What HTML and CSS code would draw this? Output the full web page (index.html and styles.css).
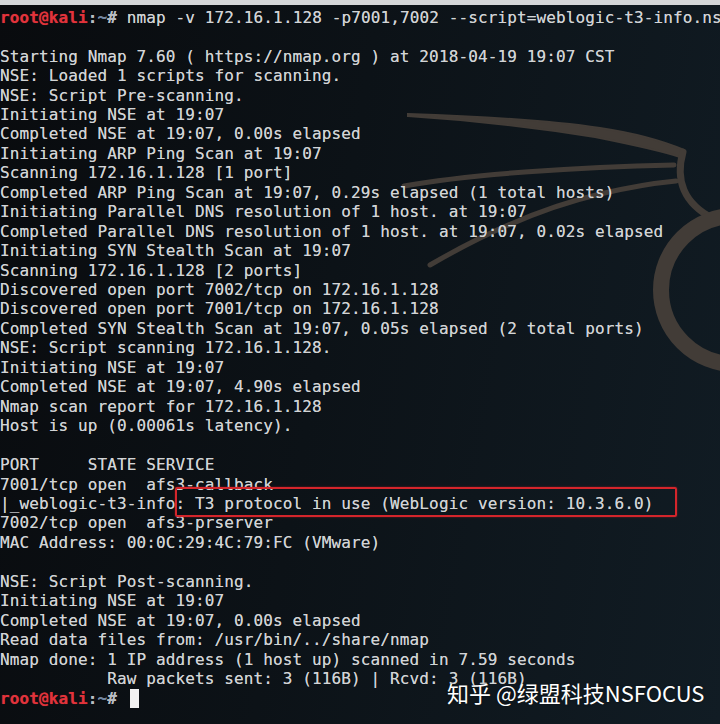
FILE: index.html
```html
<!DOCTYPE html>
<html>
<head>
<meta charset="utf-8">
<link rel="stylesheet" href="styles.css">
</head>
<body>
<div class="screen">
  <div class="topbar"></div>
  <svg class="dragon" width="720" height="724" viewBox="0 0 720 724" aria-hidden="true">
    <path class="wing" d="M408,114 C470,116 540,119 600,128 C640,134 665,142 684,150 L680,157 C660,150 630,144 595,137 C540,128 470,120 408,116 Z" />
    <path class="thin" d="M404,186 C470,174 580,167 674,165" />
    <path class="thin" d="M430,265 C480,236 540,208 600,194 C630,187 655,183 676,181" />
    <path d="M683,152 C679,166 679,178 684,190 C690,204 700,212 714,219" />
    <circle cx="735" cy="290" r="74" />
  </svg>
  <pre class="term"><span class="user">root@kali</span><span class="sep">:</span><span class="path">~</span><span class="sep">#</span> nmap -v 172.16.1.128 -p7001,7002 --script=weblogic-t3-info.nse

Starting Nmap 7.60 ( https://nmap.org ) at 2018-04-19 19:07 CST
NSE: Loaded 1 scripts for scanning.
NSE: Script Pre-scanning.
Initiating NSE at 19:07
Completed NSE at 19:07, 0.00s elapsed
Initiating ARP Ping Scan at 19:07
Scanning 172.16.1.128 [1 port]
Completed ARP Ping Scan at 19:07, 0.29s elapsed (1 total hosts)
Initiating Parallel DNS resolution of 1 host. at 19:07
Completed Parallel DNS resolution of 1 host. at 19:07, 0.02s elapsed
Initiating SYN Stealth Scan at 19:07
Scanning 172.16.1.128 [2 ports]
Discovered open port 7002/tcp on 172.16.1.128
Discovered open port 7001/tcp on 172.16.1.128
Completed SYN Stealth Scan at 19:07, 0.05s elapsed (2 total ports)
NSE: Script scanning 172.16.1.128.
Initiating NSE at 19:07
Completed NSE at 19:07, 4.90s elapsed
Nmap scan report for 172.16.1.128
Host is up (0.00061s latency).

PORT     STATE SERVICE
7001/tcp open  afs3-callback
|_weblogic-t3-info: T3 protocol in use (WebLogic version: 10.3.6.0)
7002/tcp open  afs3-prserver
MAC Address: 00:0C:29:4C:79:FC (VMware)

NSE: Script Post-scanning.
Initiating NSE at 19:07
Completed NSE at 19:07, 0.00s elapsed
Read data files from: /usr/bin/../share/nmap
Nmap done: 1 IP address (1 host up) scanned in 7.59 seconds
           Raw packets sent: 3 (116B) | Rcvd: 3 (116B)
<span class="user">root@kali</span><span class="sep">:</span><span class="path">~</span><span class="sep">#</span> <span class="cursor"> </span></pre>
  <div class="highlight"></div>
  <div class="watermark">知乎 @绿盟科技NSFOCUS</div>
</div>
</body>
</html>
```

FILE: styles.css
```css
html, body {
  margin: 0;
  padding: 0;
  background: #0c1015;
}

.screen {
  position: relative;
  width: 720px;
  height: 724px;
  overflow: hidden;
  background: linear-gradient(100deg, #090b0e 0%, #0c1217 45%, #111c24 100%);
}

.topbar {
  height: 5px;
  background: #d4d6d8;
}

.dragon {
  position: absolute;
  left: 0;
  top: 0;
  fill: none;
  stroke: #423c37;
  stroke-width: 7;
  stroke-linecap: round;
}

.dragon .wing {
  fill: #423c37;
  stroke-width: 2;
}

.dragon .thin {
  stroke-width: 5;
}

.dragon circle {
  stroke-width: 16;
}

.term {
  position: relative;
  margin: 0;
  padding: 2.7px 0 0 0;
  font-family: "DejaVu Sans Mono", "Liberation Mono", monospace;
  font-size: 16px;
  line-height: 19.46px;
  letter-spacing: 0.12px;
  color: #d2d4d6;
  white-space: pre;
  overflow: hidden;
  text-shadow: 0 0 0.6px rgba(220, 222, 224, 0.7);
}

.user {
  color: #e2333b;
  font-weight: bold;
  text-shadow: 0 0 0.8px rgba(226, 51, 59, 0.6);
}

.sep {
  color: #b8bcc2;
  font-weight: bold;
}

.path {
  color: #6f86a4;
  font-weight: bold;
}

.cursor {
  display: inline-block;
  width: 9px;
  height: 19px;
  vertical-align: top;
  margin-top: 0.5px;
  margin-left: 3px;
  background: #f2f2f2;
}

.highlight {
  position: absolute;
  left: 175px;
  top: 487px;
  width: 498px;
  height: 26px;
  border: 2.5px solid #d4252b;
  border-radius: 2px;
  box-shadow: 0 0 2px rgba(212, 37, 43, 0.6);
}

.watermark {
  position: absolute;
  left: 447px;
  top: 676px;
  font-family: "Noto Sans CJK SC", "Noto Sans", sans-serif;
  font-size: 22px;
  line-height: 32px;
  color: #ffffff;
  text-shadow: 0 0 2px rgba(0, 0, 0, 0.5);
}
```
